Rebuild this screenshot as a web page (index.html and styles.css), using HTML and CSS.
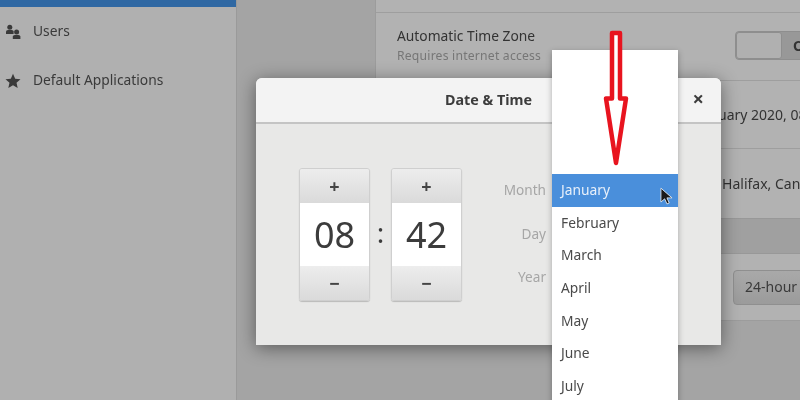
FILE: index.html
```html
<!DOCTYPE html>
<html lang="en">
<head>
<meta charset="utf-8">
<title>Date &amp; Time</title>
<link rel="stylesheet" href="styles.css">
</head>
<body>
<div class="screen">
  <aside class="sidebar">
    <div class="selected"></div>
    <div class="nav-row">
      <svg class="nav-icon" viewBox="0 0 16 16"><circle cx="4.8" cy="3.2" r="2.5"/><path d="M1 10V7.6Q1 6 3 6h3.6q2 0 2 1.6V10z"/><circle cx="11.6" cy="8" r="2.5"/><path d="M7.8 15v-2.4q0-1.7 2-1.7h3.6q2 0 2 1.7V15z"/></svg>
      <span>Users</span>
    </div>
    <div class="nav-row">
      <svg class="nav-icon" viewBox="0 0 16 16"><path d="M8 .8l2.2 4.9 5.3.5-4 3.5 1.2 5.2L8 12.2l-4.7 2.7 1.2-5.2-4-3.5 5.3-.5z"/></svg>
      <span>Default Applications</span>
    </div>
  </aside>
  <main class="main">
    <section class="panel">
      <div class="row row-top"></div>
      <div class="row row-tz">
        <div class="label-col">
          <div class="label">Automatic Time Zone</div>
          <div class="sublabel">Requires internet access</div>
        </div>
        <div class="toggle"><span class="knob"></span><span class="toggle-text">OFF</span></div>
      </div>
      <div class="row row-value"><span class="value">1 January 2020, 08:42</span></div>
      <div class="row row-value row-zone"><span class="value value-zone">AST Halifax, Canada</span></div>
      <div class="band"></div>
      <div class="row row-format"><span class="format-btn">24-hour</span></div>
    </section>
  </main>
  <div class="dialog">
    <header class="dialog-head">
      <span class="dialog-title">Date &amp; Time</span>
      <span class="dialog-close">×</span>
    </header>
    <div class="dialog-body">
      <div class="spin">
        <div class="spin-btn">+</div>
        <div class="spin-value">08</div>
        <div class="spin-btn">−</div>
      </div>
      <div class="colon">:</div>
      <div class="spin">
        <div class="spin-btn">+</div>
        <div class="spin-value">42</div>
        <div class="spin-btn">−</div>
      </div>
      <div class="fields">
        <span>Month</span>
        <span>Day</span>
        <span>Year</span>
      </div>
    </div>
  </div>
  <ul class="popup">
    <li class="active">January</li>
    <li>February</li>
    <li>March</li>
    <li>April</li>
    <li>May</li>
    <li>June</li>
    <li>July</li>
  </ul>
  <svg class="arrow" viewBox="0 0 30 140"><path d="M11 3h8v65.500h6L15 133 5 68.500h6z"/></svg>
  <svg class="cursor" viewBox="0 0 14 20"><path d="M1 1v15l4-3.500 2.500 5.500 2.500-1-2.500-5.500H13z"/></svg>
</div>
</body>
</html>
```
FILE: styles.css
```css
* { box-sizing: border-box; }
html, body { margin: 0; padding: 0; }
body { width: 800px; height: 400px; overflow: hidden; background: #a4a4a4; }
.screen {
  position: relative;
  display: flex;
  width: 800px;
  height: 400px;
  overflow: hidden;
  font-family: "Noto Sans", "Open Sans", sans-serif;
  font-size: 14px;
  color: #333;
  filter: blur(0.55px);
}
.sidebar { flex: 0 0 237px; background: #b0b0b0; border-right: 1px solid #9a9a9a; }
.selected { height: 7px; background: #2f68a3; }
.nav-row { display: flex; align-items: center; gap: 12px; height: 49px; padding-left: 5px; color: #3a3a3a; font-size: 13.8px; }
.nav-row span { position: relative; top: -1px; }
.nav-icon { width: 16px; height: 16px; fill: #3a3a3a; }
.main { flex: 1; padding-left: 138px; background: #a4a4a4; min-width: 0; }
.panel { width: 480px; height: 321px; background: #b2b2b2; border-left: 1px solid #9c9c9c; border-bottom: 1px solid #9c9c9c; display: flex; flex-direction: column; }
.row { display: flex; align-items: center; border-bottom: 1px solid #9e9e9e; }
.row-top { height: 13px; }
.row-tz { height: 68px; padding-left: 21px; }
.label-col { width: 338px; }
.label { color: #333; font-size: 13.8px; line-height: 19px; }
.sublabel { color: #767676; font-size: 12.2px; line-height: 22px; letter-spacing: .2px; }
.toggle { display: flex; align-items: center; width: 90px; height: 29px; background: #989898; border: 1px solid #8e8e8e; border-radius: 4px; margin-top: -3px; }
.knob { width: 46px; height: 27px; background: #b0b0b0; border: 1px solid #8e8e8e; border-radius: 3px; }
.toggle-text { padding-left: 11px; font-weight: 700; color: #333; }
.row-value { height: 68px; padding-left: 310px; }
.row-zone { height: 69px; border-bottom: 0; }
.value { white-space: nowrap; color: #333; }
.value-zone { margin-left: 8px; }
.band { height: 36px; background: #a0a0a0; border-top: 1px solid #989898; border-bottom: 1px solid #989898; }
.row-format { flex: 1; border-bottom: 0; padding-left: 357px; }
.format-btn { width: 100px; height: 35px; padding-left: 11px; line-height: 31px; background: linear-gradient(#a9a9a9, #9b9b9b); border: 1px solid #8f8f8f; border-radius: 4px; color: #3a3a3a; }

.dialog {
  position: absolute;
  left: 256px;
  top: 78px;
  width: 465px;
  height: 267px;
  display: flex;
  flex-direction: column;
  background: #e8e8e7;
  border-radius: 6px 6px 0 0;
  box-shadow: 0 3px 18px rgba(0, 0, 0, .45);
}
.dialog-head {
  position: relative;
  flex: 0 0 46px;
  display: flex;
  align-items: center;
  justify-content: center;
  background: #f3f3f3;
  border-bottom: 2px solid #c4c4c4;
  border-radius: 6px 6px 0 0;
}
.dialog-title { font-weight: 700; font-size: 14.3px; color: #3c3c3c; margin-top: -2px; }
.dialog-close { position: absolute; right: 17px; top: 9px; font-size: 20px; line-height: 24px; font-weight: 700; color: #3c3c3c; }
.dialog-body { flex: 1; display: flex; align-items: flex-start; padding: 44px 0 0 43px; }
.spin { width: 71px; border: 1px solid #cfcfcf; border-radius: 3px; box-shadow: 0 1px 1px rgba(0,0,0,.2); overflow: hidden; }
.spin-btn { display: flex; align-items: center; justify-content: center; height: 34px; background: linear-gradient(#ededed, #dadada); font-size: 18px; font-weight: 700; color: #444; }
.spin-value { height: 63px; background: #fff; display: flex; align-items: center; justify-content: center; font-size: 36px; color: #3c3c3c; }
.colon { width: 21px; margin-top: 42px; text-align: center; font-size: 28px; line-height: 44px; color: #3c3c3c; }
.fields { width: 84px; padding-top: 11px; display: flex; flex-direction: column; align-items: flex-end; gap: 21.5px; font-size: 13.6px; color: #a6a6a6; line-height: 22px; }

.popup {
  position: absolute;
  left: 552px;
  top: 50px;
  width: 126px;
  height: 360px;
  margin: 0;
  padding: 124px 0 0;
  list-style: none;
  background: #fff;
  box-shadow: 0 2px 6px rgba(0, 0, 0, .3);
}
.popup li { height: 32.7px; line-height: 32px; padding-left: 9px; font-size: 13.8px; color: #4a4a4a; }
.popup li.active { background: #4a8fdb; color: #e8f0fa; }
.arrow { position: absolute; left: 601px; top: 30px; width: 30px; height: 140px; fill: #fff; stroke: #e8141f; stroke-width: 4.5; stroke-linejoin: round; }
.cursor { position: absolute; left: 660px; top: 187px; width: 13px; height: 19px; fill: #1a1a1a; stroke: #d8e4f0; stroke-width: 1; }
```
